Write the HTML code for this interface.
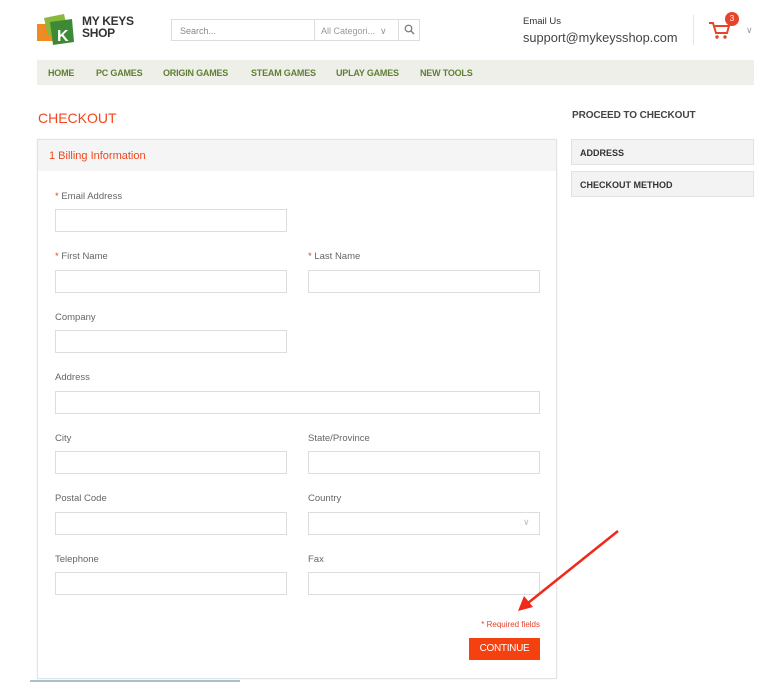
<!DOCTYPE html>
<html><head><meta charset="utf-8"><style>
*{margin:0;padding:0;box-sizing:border-box}
body{width:768px;height:682px;background:#fff;font-family:"Liberation Sans",sans-serif;position:relative;overflow:hidden;color:#555}
.a{position:absolute}
.lbl{position:absolute;font-size:9.5px;color:#666}
.lbl b{color:#e8432a;font-weight:normal}
.inp{position:absolute;height:23px;border:1px solid #ddd;background:#fff}
.nav span{position:absolute;top:68px;font-size:9px;font-weight:bold;color:#5f7f33;letter-spacing:-0.2px}
</style></head><body>
<svg class="a" style="left:36px;top:12px" width="42" height="34" viewBox="0 0 42 34">
<rect x="1" y="12" width="16" height="17" fill="#f08a24"/>
<polygon points="8,6 28,2 32,20 12,24" fill="#8ab83a"/>
<polygon points="14,10 36,7 38,30 17,33" fill="#3d8a36"/>
<text x="21" y="29" font-family="Liberation Sans" font-weight="bold" font-size="16" fill="#fff">K</text>
</svg>
<div class="a" style="left:82px;top:15px;font-size:12px;font-weight:bold;color:#333;line-height:12px;letter-spacing:-0.3px">MY KEYS<br>SHOP</div>
<div class="a" style="left:171px;top:19px;width:249px;height:22px;border:1px solid #ddd"></div>
<div class="a" style="left:180px;top:26px;font-size:9px;color:#888">Search...</div>
<div class="a" style="left:314px;top:19px;width:1px;height:22px;background:#ddd"></div>
<div class="a" style="left:321px;top:26px;font-size:9px;color:#999">All Categori...&nbsp; ∨</div>
<div class="a" style="left:398px;top:19px;width:1px;height:22px;background:#ddd"></div>
<svg class="a" style="left:404px;top:24px" width="11" height="11"><circle cx="4.5" cy="4.5" r="3.3" stroke="#777" stroke-width="1.2" fill="none"/><line x1="7" y1="7" x2="10" y2="10" stroke="#777" stroke-width="1.3"/></svg>
<div class="a" style="left:523px;top:16px;font-size:9.5px;color:#333">Email Us</div>
<div class="a" style="left:523px;top:30px;font-size:12.8px;color:#444">support@mykeysshop.com</div>
<div class="a" style="left:693px;top:15px;width:1px;height:30px;background:#e5e5e5"></div>
<svg class="a" style="left:708px;top:20px" width="24" height="20" viewBox="0 0 24 20"><path d="M1 3h4l3 10h11l2-7H7" stroke="#e8432a" stroke-width="2" fill="none"/><circle cx="9" cy="17" r="1.7" fill="#e8432a"/><circle cx="17" cy="17" r="1.7" fill="#e8432a"/></svg>
<div class="a" style="left:725px;top:12px;width:14px;height:14px;border-radius:7px;background:#e8432a;color:#fff;font-size:8px;text-align:center;line-height:14px">3</div>
<div class="a" style="left:746px;top:25px;font-size:9px;color:#999">∨</div>
<div class="a" style="left:37px;top:60px;width:717px;height:25px;background:#efefea"></div>
<div class="nav"><span style="left:48px">HOME</span><span style="left:96px">PC GAMES</span><span style="left:163px">ORIGIN GAMES</span><span style="left:251px">STEAM GAMES</span><span style="left:336px">UPLAY GAMES</span><span style="left:420px">NEW TOOLS</span></div>
<div class="a" style="left:38px;top:110px;font-size:14px;color:#f0461e">CHECKOUT</div>
<div class="a" style="left:37px;top:139px;width:520px;height:540px;border:1px solid #e3e3e3;box-shadow:0 0 2px #eee"></div>
<div class="a" style="left:38px;top:140px;width:518px;height:31px;background:#f5f5f5"></div>
<div class="a" style="left:49px;top:150px;font-size:11px;color:#f0461e">1 Billing Information</div>
<div class="lbl" style="left:55px;top:191px"><b>*</b> Email Address</div>
<div class="inp" style="left:55px;top:209px;width:232px"></div>
<div class="lbl" style="left:55px;top:251px"><b>*</b> First Name</div>
<div class="inp" style="left:55px;top:270px;width:232px"></div>
<div class="lbl" style="left:308px;top:251px"><b>*</b> Last Name</div>
<div class="inp" style="left:308px;top:270px;width:232px"></div>
<div class="lbl" style="left:55px;top:312px">Company</div>
<div class="inp" style="left:55px;top:330px;width:232px"></div>
<div class="lbl" style="left:55px;top:372px">Address</div>
<div class="inp" style="left:55px;top:391px;width:485px"></div>
<div class="lbl" style="left:55px;top:433px">City</div>
<div class="inp" style="left:55px;top:451px;width:232px"></div>
<div class="lbl" style="left:308px;top:433px">State/Province</div>
<div class="inp" style="left:308px;top:451px;width:232px"></div>
<div class="lbl" style="left:55px;top:493px">Postal Code</div>
<div class="inp" style="left:55px;top:512px;width:232px"></div>
<div class="lbl" style="left:308px;top:493px">Country</div>
<div class="inp" style="left:308px;top:512px;width:232px"></div>
<div class="a" style="left:523px;top:517px;font-size:9px;color:#bbb">∨</div>
<div class="lbl" style="left:55px;top:554px">Telephone</div>
<div class="inp" style="left:55px;top:572px;width:232px"></div>
<div class="lbl" style="left:308px;top:554px">Fax</div>
<div class="inp" style="left:308px;top:572px;width:232px"></div>
<div class="a" style="left:440px;top:620px;width:100px;text-align:right;font-size:8px;color:#e8432a">* Required fields</div>
<div class="a" style="left:469px;top:638px;width:71px;height:22px;background:#f5400f;color:#fff;font-size:10px;text-align:center;line-height:22px;letter-spacing:-0.3px">CONTINUE</div>
<div class="a" style="left:572px;top:110px;font-size:10px;font-weight:bold;color:#444;letter-spacing:-0.1px">PROCEED TO CHECKOUT</div>
<div class="a" style="left:571px;top:139px;width:183px;height:26px;background:#f3f3f3;border:1px solid #e2e2e2;font-size:9px;font-weight:bold;color:#333;padding:8px 0 0 8px">ADDRESS</div>
<div class="a" style="left:571px;top:171px;width:183px;height:26px;background:#f3f3f3;border:1px solid #e2e2e2;font-size:9px;font-weight:bold;color:#333;padding:8px 0 0 8px">CHECKOUT METHOD</div>
<svg class="a" style="left:0;top:0" width="768" height="682"><line x1="618" y1="531" x2="528" y2="603" stroke="#f02a1a" stroke-width="2.5"/><polygon points="518,611 524,596 533,607" fill="#f02a1a"/></svg>
<div class="a" style="left:30px;top:680px;width:210px;height:2px;background:#a8bfd0"></div>
</body></html>
